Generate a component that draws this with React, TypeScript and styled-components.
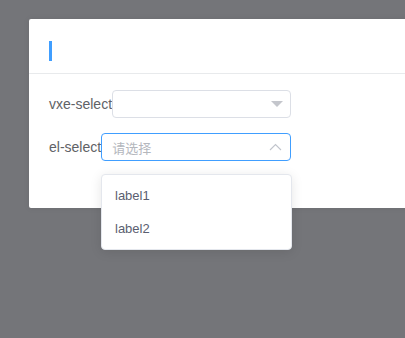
import React from "react";
import styled, { createGlobalStyle } from "styled-components";

const Global = createGlobalStyle`
  html, body { margin: 0; padding: 0; }
  body {
    background: #747579;
    font-family: "Liberation Sans", Arial, "Noto Sans CJK SC", sans-serif;
    overflow: hidden;
  }
`;

const Page = styled.div`
  position: relative;
  width: 405px;
  height: 338px;
  overflow: hidden;
  padding: 19px 0 0 29px;
  box-sizing: border-box;
`;

const Modal = styled.div`
  width: 420px;
  background: #ffffff;
  border-radius: 2px 0 0 2px;
  box-shadow: 0 0 6px rgba(0, 0, 0, 0.08);
`;

const Header = styled.div`
  height: 55px;
  box-sizing: border-box;
  padding: 22px 20px 0;
  border-bottom: 1px solid #e8eaec;
`;

const TitleMark = styled.div`
  width: 3px;
  height: 20px;
  background: #409eff;
`;

const Body = styled.div`
  padding: 16px 20px 47px;
  display: flex;
  flex-direction: column;
  gap: 15px;
`;

const Row = styled.div`
  display: flex;
  align-items: center;
  height: 28px;
`;

const Label = styled.span`
  font-size: 14px;
  color: #606266;
  white-space: nowrap;
`;

const Box = styled.div<{ $focus?: boolean; $w: number }>`
  position: relative;
  box-sizing: border-box;
  width: ${(p) => p.$w}px;
  height: 28px;
  border: 1px solid ${(p) => (p.$focus ? "#409eff" : "#dcdfe6")};
  border-radius: 4px;
  background: #fff;
  display: flex;
  align-items: center;
  justify-content: space-between;
  padding: 0 7px 0 10px;
`;

const Placeholder = styled.span`
  font-size: 13px;
  color: #b4b7bd;
`;

const Dropdown = styled.div`
  position: absolute;
  left: 101px;
  top: 174px;
  width: 191px;
  box-sizing: border-box;
  background: #fff;
  border: 1px solid #e4e7ed;
  border-radius: 4px;
  box-shadow: 0 2px 12px rgba(0, 0, 0, 0.1);
  padding: 4px 0;
`;

const Item = styled.div`
  height: 33px;
  line-height: 33px;
  padding: 0 13px;
  font-size: 13px;
  color: #5a5e70;
`;

export default function App() {
  return (
    <>
      <Global />
      <Page>
        <Modal>
          <Header>
            <TitleMark />
          </Header>
          <Body>
            <Row>
              <Label>vxe-select</Label>
              <Box $w={179}>
                <span />
                <svg width="12" height="6" viewBox="0 0 12 6">
                  <path d="M0 0 L12 0 L6 6 Z" fill="#c4c6cc" />
                </svg>
              </Box>
            </Row>
            <Row>
              <Label>el-select</Label>
              <Box $w={190} $focus>
                <Placeholder>请选择</Placeholder>
                <svg width="13" height="8" viewBox="0 0 13 8" style={{ marginRight: 1 }}>
                  <path d="M1 7 L6.5 1.5 L12 7" fill="none" stroke="#c0c4cc" strokeWidth="1.1" />
                </svg>
              </Box>
            </Row>
          </Body>
        </Modal>
        <Dropdown>
          <Item>label1</Item>
          <Item>label2</Item>
        </Dropdown>
      </Page>
    </>
  );
}
